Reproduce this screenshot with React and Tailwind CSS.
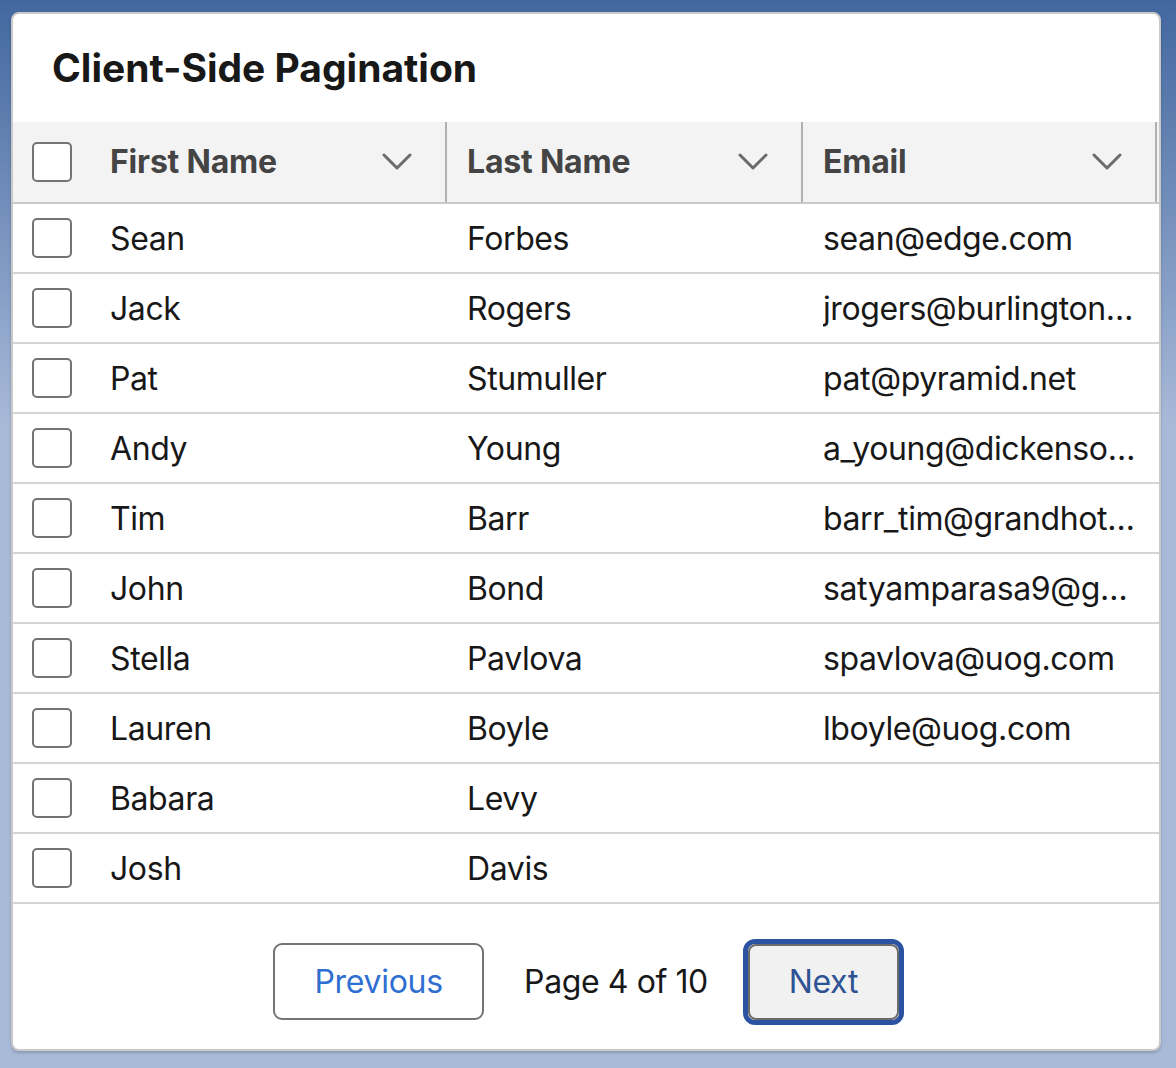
import React from "react";

const rows = [
  ["Sean", "Forbes", "sean@edge.com"],
  ["Jack", "Rogers", "jrogers@burlington…"],
  ["Pat", "Stumuller", "pat@pyramid.net"],
  ["Andy", "Young", "a_young@dickenso…"],
  ["Tim", "Barr", "barr_tim@grandhot…"],
  ["John", "Bond", "satyamparasa9@g…"],
  ["Stella", "Pavlova", "spavlova@uog.com"],
  ["Lauren", "Boyle", "lboyle@uog.com"],
  ["Babara", "Levy", ""],
  ["Josh", "Davis", ""],
];

function Box() {
  return <div className="w-[40px] h-[40px] rounded-[5px] border-2 border-[#747474] bg-white" />;
}

function Chevron() {
  return (
    <svg width="30" height="20" viewBox="0 0 30 20" className="shrink-0">
      <polyline points="2,3 15,16 28,3" fill="none" stroke="#6b6b6b" strokeWidth="3" strokeLinecap="round" strokeLinejoin="round" />
    </svg>
  );
}

function HeadCell({ label, last }) {
  return (
    <div className={"flex items-center justify-between pl-[20px] pr-[33px] border-l-2 border-[#b0b0b0] " + (last ? "border-r-2" : "")}>
      <span className="text-[32px] font-bold text-[#444444] tracking-[-0.2px]">{label}</span>
      <Chevron />
    </div>
  );
}

export default function App() {
  return (
    <div
      className="min-h-[1068px] w-[1176px] bg-linear-to-b from-[#42679f] to-[#a9bad8] to-40% pl-[11px] pt-[12px]"
      style={{ fontFamily: "Inter, 'Noto Sans', sans-serif" }}
    >
      <div className="w-[1150px] h-[1039px] bg-white rounded-[8px] border-2 border-[#c9c9c9] shadow-[0_2px_3px_rgba(0,0,0,0.18)] flex flex-col overflow-hidden">
        <div className="h-[108px] flex items-center pl-[39px]">
          <h1 className="text-[39px] font-bold text-[#181818]">Client-Side Pagination</h1>
        </div>
        <div className="w-[1146px]">
          <div className="grid grid-cols-[76px_356px_356px_356px] h-[82px] bg-[#f3f3f3] border-b-2 border-[#c9c9c9]">
            <div className="flex items-center pl-[19px]">
              <Box />
            </div>
            <div className="flex items-center justify-between pl-[21px] pr-[33px]">
              <span className="text-[32px] font-bold text-[#444444] tracking-[-0.2px]">First Name</span>
              <Chevron />
            </div>
            <HeadCell label="Last Name" />
            <HeadCell label="Email" last />
          </div>
          {rows.map((r, i) => (
            <div key={i} className="grid grid-cols-[76px_356px_356px_356px] h-[70px] border-b-2 border-[#d4d4d4] text-[32px] text-[#181818] tracking-[-0.4px]">
              <div className="flex items-center pl-[19px]">
                <Box />
              </div>
              <div className="flex items-center pl-[21px] pr-[20px] pt-[2px]">{r[0]}</div>
              <div className="flex items-center pl-[22px] pr-[20px] pt-[2px]">{r[1]}</div>
              <div className="flex items-center pl-[22px] pr-[16px] pt-[2px] min-w-0">
                <span className="truncate">{r[2]}</span>
              </div>
            </div>
          ))}
        </div>
        <div className="flex-1 flex items-center justify-center pt-[10px] pl-[5px]">
          <button className="w-[211px] h-[77px] rounded-[9px] border-2 border-[#747474] bg-white text-[32px] text-[#2f6fd1] tracking-[-0.3px]">
            Previous
          </button>
          <span className="text-[32px] text-[#181818] tracking-[-0.4px] ml-[40px] mr-[35px]">Page 4 of 10</span>
          <div className="rounded-[12px] border-[5px] border-[#2b53a1]">
            <button className="w-[151px] h-[76px] rounded-[8px] border-2 border-[#6b6b6b] bg-[#f1f1f1] text-[32px] text-[#2d5394] tracking-[-0.3px]">
              Next
            </button>
          </div>
        </div>
      </div>
    </div>
  );
}
